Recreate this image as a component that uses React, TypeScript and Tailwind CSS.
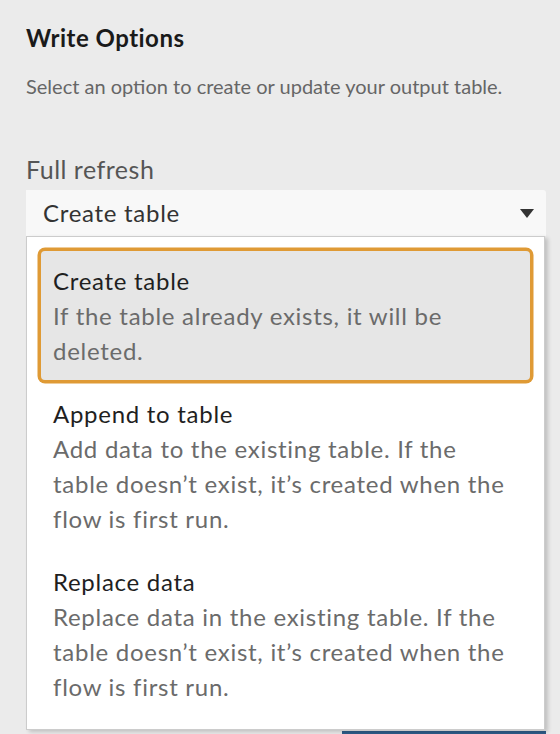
import { useState } from 'react'

type WriteOption = {
  id: string
  label: string
  description: string
}

const options: WriteOption[] = [
  {
    id: 'create',
    label: 'Create table',
    description: 'If the table already exists, it will be deleted.',
  },
  {
    id: 'append',
    label: 'Append to table',
    description: "Add data to the existing table. If the table doesn\u2019t exist, it\u2019s created when the flow is first run.",
  },
  {
    id: 'replace',
    label: 'Replace data',
    description: "Replace data in the existing table. If the table doesn\u2019t exist, it\u2019s created when the flow is first run.",
  },
]

function CaretDown() {
  return (
    <svg width="14" height="9" viewBox="0 0 14 9" aria-hidden="true">
      <path d="M0 0 H14 L7 9 Z" fill="#333333" />
    </svg>
  )
}

export default function App() {
  const [selected, setSelected] = useState('create')
  const current = options.find((o) => o.id === selected) ?? options[0]

  return (
    <div className="w-[560px] h-[734px] overflow-hidden bg-[#ebebeb] pl-[26px] pr-[14px] pt-[26px] font-['Lato','Noto_Sans',sans-serif]">
      <h2 className="text-[24px] leading-[24px] font-bold tracking-[0.02em] text-[#1a1a1a]">Write Options</h2>
      <p className="mt-[24px] text-[20px] leading-[24px] text-[#666666] whitespace-nowrap">
        Select an option to create or update your output table.
      </p>

      <div className="mt-[57px] text-[25px] leading-[28px] tracking-[0.02em] text-[#555555]">Full refresh</div>

      <div className="relative mt-[7px]">
        <button className="flex h-[46px] w-full items-center justify-between rounded-tr-[3px] bg-[#f8f8f8] pl-[17px] pr-[12px] text-left">
          <span className="text-[24px] tracking-[0.03em] text-[#333333]">{current.label}</span>
          <CaretDown />
        </button>

        <div className="absolute left-0 right-[1px] top-[46px] z-10 border border-[#cccccc] bg-white px-[12px] pt-[12px] pb-[11px] shadow-[3px_2px_4px_rgba(0,0,0,0.18)]">
          {options.map((opt) => {
            const active = opt.id === selected
            return (
              <div
                key={opt.id}
                onClick={() => setSelected(opt.id)}
                className={`cursor-pointer rounded-[6px] border-2 px-[12px] py-[12px] text-[24px] leading-[35px] tracking-[0.03em] ${
                  active
                    ? 'border-[#df9a35] bg-[#e6e6e6] shadow-[0_0_0_1.5px_#df9a35]'
                    : 'border-transparent'
                }`}
              >
                <div className="text-[#1f1f1f]">{opt.label}</div>
                <div className="text-[#6b6b6b]">{opt.description}</div>
              </div>
            )
          })}
        </div>
      </div>

      <div className="mt-[495px] flex justify-end">
        <button className="h-[40px] w-[204px] bg-[#2d5c88] text-white">
          <span className="-mt-[2px] block text-[18px] leading-none font-bold uppercase tracking-[0.12em]">Save Data</span>
        </button>
      </div>
    </div>
  )
}
